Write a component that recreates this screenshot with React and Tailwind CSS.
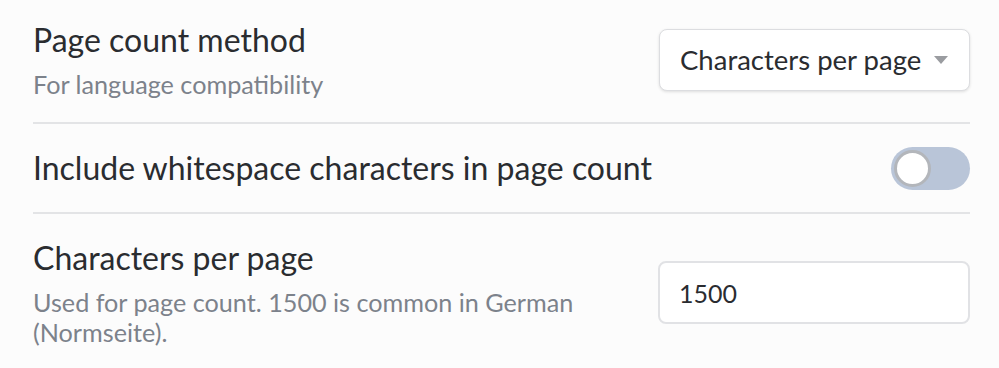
import React from 'react';

const Title = ({ children }) => (
  <div className="text-[32px] leading-[40px] text-[#2a2c30]">{children}</div>
);

const Sub = ({ children }) => (
  <div className="mt-[9px] text-[25.2px] leading-[30px] text-[#7c828b] max-w-[590px]">{children}</div>
);

export default function App() {
  return (
    <div className="w-[999px] h-[368px] bg-[#fcfcfc] pl-[33px] pr-[29px] pt-[20px] font-['Lato','Noto_Sans',sans-serif]">
      <div className="h-[104px] flex items-start justify-between border-b-2 border-[#e3e4e6]">
        <div>
          <Title>Page count method</Title>
          <Sub>For language compatibility</Sub>
        </div>
        <button className="mt-[9px] w-[311px] h-[62px] rounded-[8px] border border-[#dcdde0] bg-white shadow-[0_1px_3px_rgba(0,0,0,0.12)] flex items-center justify-between pl-[20px] pr-[20px] text-[27.5px] text-[#2a2c30]">
          <span>Characters per page</span>
          <svg width="16" height="10" viewBox="0 0 16 10"><path d="M1 1h14L8 9z" fill="#9a9ca0" /></svg>
        </button>
      </div>
      <div className="h-[90px] flex items-center justify-between border-b-2 border-[#e3e4e6]">
        <Title>Include whitespace characters in page count</Title>
        <div className="w-[79px] h-[43px] rounded-full bg-[#b9c5d8] p-[3px] flex items-center">
          <div className="w-[37px] h-[37px] rounded-full bg-white border-[3px] border-[#b3b6bb]" />
        </div>
      </div>
      <div className="pt-[24px] flex items-start justify-between">
        <div>
          <Title>Characters per page</Title>
          <Sub>Used for page count. 1500 is common in German (Normseite).</Sub>
        </div>
        <input readOnly value="1500" className="mt-[23px] w-[312px] h-[63px] rounded-[8px] border-2 border-[#e1e2e5] bg-white px-[19px] text-[25px] text-[#2a2c30] outline-none" />
      </div>
    </div>
  );
}
